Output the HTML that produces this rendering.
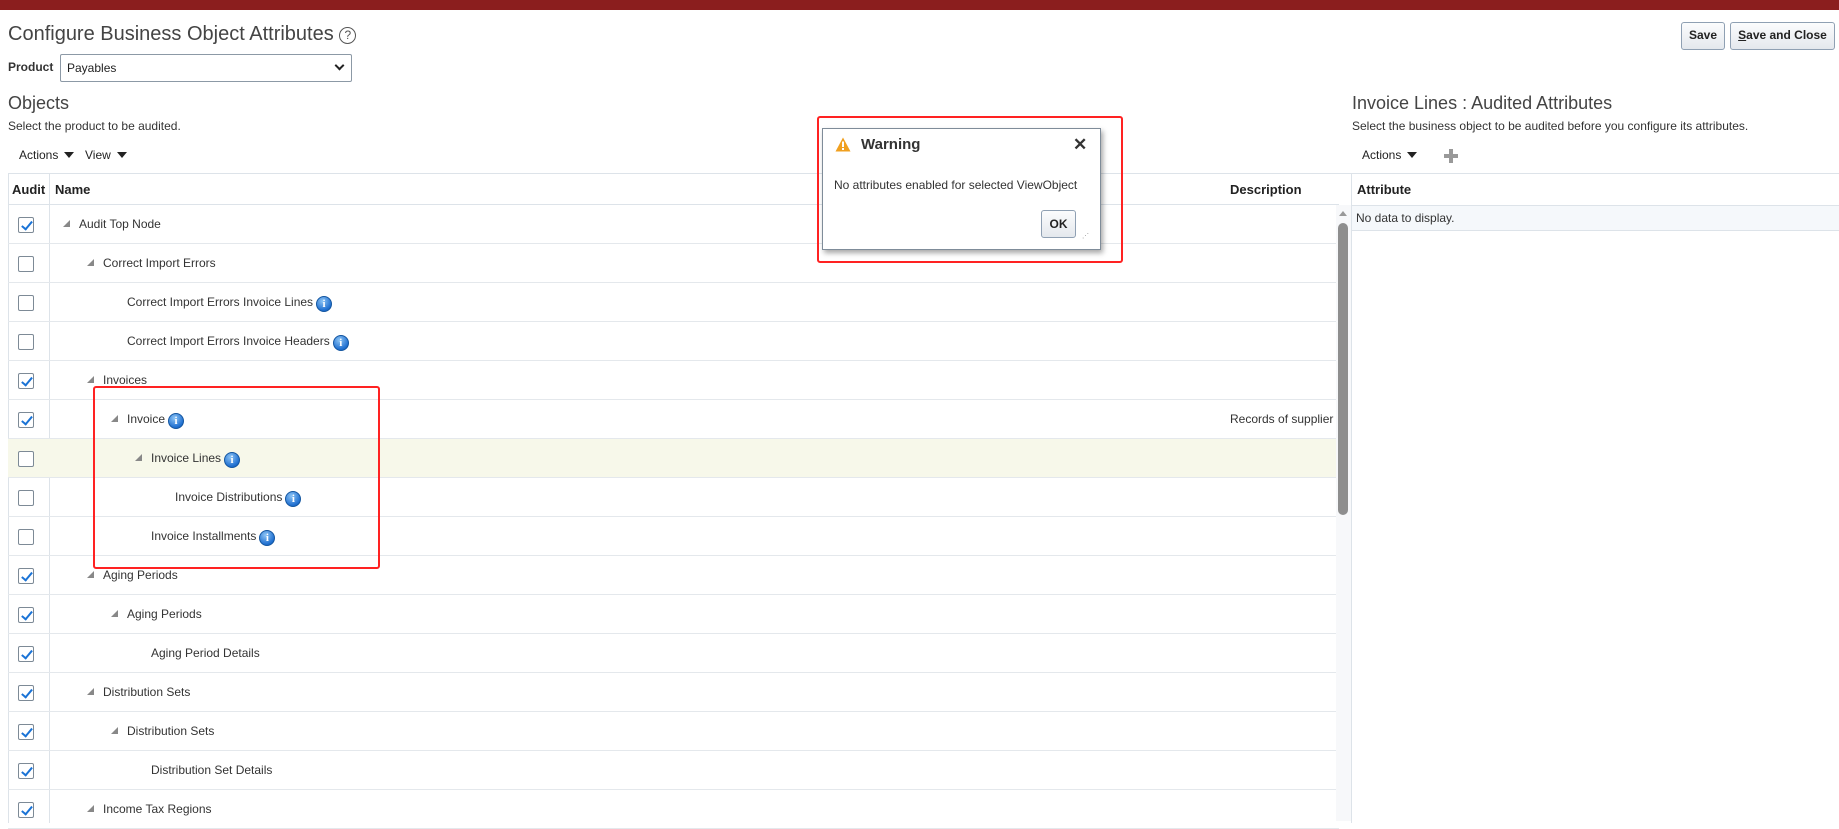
<!DOCTYPE html>
<html><head><meta charset="utf-8"><style>
*{margin:0;padding:0;box-sizing:border-box}
body{width:1839px;height:821px;overflow:hidden;background:#fff;font-family:"Liberation Sans",Arial,sans-serif;font-size:12px;color:#333;position:relative}
.a{position:absolute;white-space:nowrap}
.bar{left:0;top:0;width:1839px;height:10px;background:#8b1e1e}
.btn{border:1px solid #8fa0b3;border-radius:3px;background:linear-gradient(#fbfcfd,#e4e8ed);font-weight:bold;color:#222;font-size:12px;text-align:center;line-height:25px}
.row{position:absolute;left:8px;width:1331px;height:39px;border-bottom:1px solid #e4e8ec}
.cb{position:absolute;left:10px;top:12px;width:16px;height:16px;border:1px solid #7d8a96;border-radius:2px;background:#fff}
.cb.on::after{content:"";position:absolute;left:5px;top:1px;width:4px;height:9px;border:solid #1a73d6;border-width:0 2px 2px 0;transform:rotate(40deg)}
.nm{position:absolute;top:12px;font-size:12px;color:#333}
.tri{position:absolute;top:15px;width:0;height:0;border-left:7px solid transparent;border-bottom:7px solid #888}
.info{display:inline-block;width:16px;height:16px;border-radius:50%;background:radial-gradient(circle at 40% 30%,#8ec5f5,#1f6fd0 70%,#1458a8);border:1px solid #1456a0;color:#fff;font-weight:bold;font-size:11px;line-height:14px;text-align:center;vertical-align:-1px;margin-left:3px;font-family:"Liberation Serif",serif}
.dn{display:inline-block;width:0;height:0;border-left:5px solid transparent;border-right:5px solid transparent;border-top:6px solid #222;margin-left:6px;vertical-align:1px}
</style></head><body>
<div class="a bar"></div>
<div class="a" style="left:8px;top:23px;font-size:20px;color:#444">Configure Business Object Attributes <span style="display:inline-block;width:17px;height:17px;border:1.5px solid #555;border-radius:50%;font-size:12px;text-align:center;line-height:14px;vertical-align:1px;color:#555">?</span></div>
<div class="a" style="left:8px;top:60px;font-weight:bold;color:#333">Product</div>
<div class="a" style="left:60px;top:54px;width:292px;height:28px;border:1px solid #8c99a6;border-radius:2px;padding:6px 0 0 6px;color:#222">Payables<span style="position:absolute;right:8px;top:7px;width:7px;height:7px;border:solid #222;border-width:0 2px 2px 0;transform:rotate(45deg)"></span></div>
<div class="a" style="left:8px;top:93px;font-size:18px;color:#444">Objects</div>
<div class="a" style="left:8px;top:119px;font-size:12px;color:#333">Select the product to be audited.</div>
<div class="a" style="left:19px;top:148px;color:#222">Actions<span class="dn"></span></div>
<div class="a" style="left:85px;top:148px;color:#222">View<span class="dn"></span></div>

<div class="a" style="left:1681px;top:22px;width:44px;height:28px" ><div class="btn" style="height:28px">Save</div></div>
<div class="a" style="left:1730px;top:22px;width:105px;height:28px"><div class="btn" style="height:28px"><u>S</u>ave and Close</div></div>

<div class="a" style="left:8px;top:173px;width:1343px;height:650px;border-left:1px solid #dde3e9;border-top:1px solid #dde3e9"></div>
<div class="a" style="left:8px;top:173px;width:1331px;height:32px;border-bottom:1px solid #dde3e9"></div>
<div class="a" style="left:49px;top:173px;width:1px;height:650px;background:#dde3e9"></div>
<div class="a" style="left:12px;top:182px;font-weight:bold;font-size:13px;color:#222">Audit</div>
<div class="a" style="left:55px;top:182px;font-weight:bold;font-size:13px;color:#222">Name</div>
<div class="a" style="left:1230px;top:182px;font-weight:bold;font-size:13px;color:#222">Description</div>

<div class="row" style="top:205px"><div class="cb on"></div><div class="tri" style="left:55px"></div><div class="nm" style="left:71px">Audit Top Node</div></div>
<div class="row" style="top:244px"><div class="cb"></div><div class="tri" style="left:79px"></div><div class="nm" style="left:95px">Correct Import Errors</div></div>
<div class="row" style="top:283px"><div class="cb"></div><div class="nm" style="left:119px">Correct Import Errors Invoice Lines<span class="info">i</span></div></div>
<div class="row" style="top:322px"><div class="cb"></div><div class="nm" style="left:119px">Correct Import Errors Invoice Headers<span class="info">i</span></div></div>
<div class="row" style="top:361px"><div class="cb on"></div><div class="tri" style="left:79px"></div><div class="nm" style="left:95px">Invoices</div></div>
<div class="row" style="top:400px"><div class="cb on"></div><div class="tri" style="left:103px"></div><div class="nm" style="left:119px">Invoice<span class="info">i</span></div><div class="nm" style="left:1222px">Records of supplier</div></div>
<div class="row" style="top:439px;background:#f7f8ea"><div class="cb"></div><div class="tri" style="left:127px"></div><div class="nm" style="left:143px">Invoice Lines<span class="info">i</span></div></div>
<div class="row" style="top:478px"><div class="cb"></div><div class="nm" style="left:167px">Invoice Distributions<span class="info">i</span></div></div>
<div class="row" style="top:517px"><div class="cb"></div><div class="nm" style="left:143px">Invoice Installments<span class="info">i</span></div></div>
<div class="row" style="top:556px"><div class="cb on"></div><div class="tri" style="left:79px"></div><div class="nm" style="left:95px">Aging Periods</div></div>
<div class="row" style="top:595px"><div class="cb on"></div><div class="tri" style="left:103px"></div><div class="nm" style="left:119px">Aging Periods</div></div>
<div class="row" style="top:634px"><div class="cb on"></div><div class="nm" style="left:143px">Aging Period Details</div></div>
<div class="row" style="top:673px"><div class="cb on"></div><div class="tri" style="left:79px"></div><div class="nm" style="left:95px">Distribution Sets</div></div>
<div class="row" style="top:712px"><div class="cb on"></div><div class="tri" style="left:103px"></div><div class="nm" style="left:119px">Distribution Sets</div></div>
<div class="row" style="top:751px"><div class="cb on"></div><div class="nm" style="left:143px">Distribution Set Details</div></div>
<div class="row" style="top:790px"><div class="cb on"></div><div class="tri" style="left:79px"></div><div class="nm" style="left:95px">Income Tax Regions</div></div>

<div class="a" style="left:1336px;top:205px;width:15px;height:616px;background:#f7f8fa"></div>
<div class="a" style="left:1339px;top:211px;width:0;height:0;border-left:4px solid transparent;border-right:4px solid transparent;border-bottom:5px solid #999"></div>
<div class="a" style="left:1338px;top:223px;width:10px;height:292px;background:#8e8e8e;border-radius:5px"></div>
<div class="a" style="left:1351px;top:173px;width:1px;height:650px;background:#dde3e9"></div>

<div class="a" style="left:93px;top:386px;width:287px;height:183px;border:2px solid #f22;border-radius:3px"></div>

<div class="a" style="left:1352px;top:93px;font-size:18px;color:#444">Invoice Lines : Audited Attributes</div>
<div class="a" style="left:1352px;top:119px;font-size:12px;color:#333">Select the business object to be audited before you configure its attributes.</div>
<div class="a" style="left:1362px;top:148px;color:#222">Actions<span class="dn"></span></div>
<div class="a" style="left:1444px;top:149px;width:14px;height:14px">
<div class="a" style="left:5px;top:0;width:4px;height:14px;background:#999"></div><div class="a" style="left:0;top:5px;width:14px;height:4px;background:#999"></div></div>
<div class="a" style="left:1352px;top:173px;width:487px;height:1px;background:#dde3e9"></div>
<div class="a" style="left:1357px;top:182px;font-weight:bold;font-size:13px;color:#222">Attribute</div>
<div class="a" style="left:1352px;top:205px;width:487px;height:26px;background:#f5f8fb;border-top:1px solid #dde3e9;border-bottom:1px solid #dde3e9"></div>
<div class="a" style="left:1356px;top:211px;color:#333">No data to display.</div>

<div class="a" style="left:817px;top:116px;width:306px;height:147px;border:2px solid #f22;border-radius:3px"></div>
<div class="a" style="left:822px;top:128px;width:279px;height:122px;border:1px solid #7f8c99;background:#fff;box-shadow:2px 3px 5px rgba(0,0,0,.35)"></div>
<div class="a" style="left:835px;top:137px;width:16px;height:15px">
<svg width="16" height="15" viewBox="0 0 16 15"><path d="M8 0.5 L15.5 14.5 L0.5 14.5 Z" fill="#f0a020"/><rect x="7" y="4.5" width="2" height="5.5" fill="#fff"/><rect x="7" y="11" width="2" height="2" fill="#fff"/></svg></div>
<div class="a" style="left:861px;top:136px;font-weight:bold;font-size:15px;color:#333">Warning</div>
<div class="a" style="left:1073px;top:135px;font-size:17px;font-weight:bold;color:#333">✕</div>
<div class="a" style="left:834px;top:178px;font-size:12px;color:#333">No attributes enabled for selected ViewObject</div>
<div class="a" style="left:1041px;top:210px;width:35px;height:28px"><div class="btn" style="height:28px;line-height:26px;font-size:12px">OK</div></div>
<div class="a" style="left:1082px;top:232px;font-size:7px;color:#999;letter-spacing:-1px">⋰</div>
</body></html>
